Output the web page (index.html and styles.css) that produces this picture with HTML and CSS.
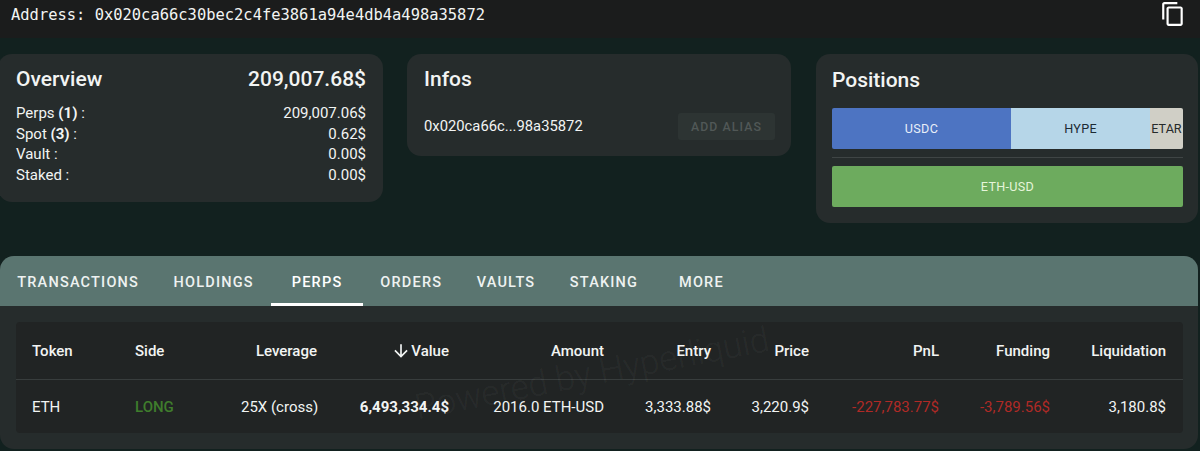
FILE: index.html
```html
<!DOCTYPE html>
<html lang="en">
<head>
    <meta charset="UTF-8">
    <meta name="viewport" content="width=device-width, initial-scale=1.0">
    <title>Address</title>
    <link rel="stylesheet" href="styles.css">
</head>
<body>
    <!-- Address bar -->
    <header class="topbar">
        <span class="address">Address: 0x020ca66c30bec2c4fe3861a94e4db4a498a35872</span>
        <svg class="copy-icon" viewBox="0 0 24 24" fill="currentColor">
            <path d="M16 1H4c-1.1 0-2 .9-2 2v14h2V3h12V1zm3 4H8c-1.1 0-2 .9-2 2v14c0 1.1.9 2 2 2h11c1.1 0 2-.9 2-2V7c0-1.1-.9-2-2-2zm0 16H8V7h11v14z"/>
        </svg>
    </header>

    <div class="cards">
        <!-- Overview -->
        <section class="card overview">
            <div class="overview-head">
                <h2>Overview</h2>
                <h2>209,007.68$</h2>
            </div>
            <div class="stat"><span>Perps <b>(1)</b> :</span><span>209,007.06$</span></div>
            <div class="stat"><span>Spot <b>(3)</b> :</span><span>0.62$</span></div>
            <div class="stat"><span>Vault :</span><span>0.00$</span></div>
            <div class="stat"><span>Staked :</span><span>0.00$</span></div>
        </section>

        <!-- Infos -->
        <section class="card infos">
            <h2>Infos</h2>
            <div class="infos-row">
                <span class="short-address">0x020ca66c...98a35872</span>
                <button class="alias-btn" disabled>Add alias</button>
            </div>
        </section>

        <!-- Positions -->
        <section class="card positions">
            <h2>Positions</h2>
            <div class="bar">
                <div class="seg seg-usdc">USDC</div>
                <div class="seg seg-hype">HYPE</div>
                <div class="seg seg-etar">ETAR</div>
            </div>
            <hr class="bar-divider">
            <div class="bar">
                <div class="seg seg-eth">ETH-USD</div>
            </div>
        </section>
    </div>

    <!-- Tabs and table -->
    <section class="panel">
        <nav class="tabs">
            <a class="tab">Transactions</a>
            <a class="tab">Holdings</a>
            <a class="tab active">Perps</a>
            <a class="tab">Orders</a>
            <a class="tab">Vaults</a>
            <a class="tab">Staking</a>
            <a class="tab">More</a>
        </nav>
        <div class="table-wrap">
            <table>
                <thead>
                    <tr>
                        <th class="left">Token</th>
                        <th class="left">Side</th>
                        <th>Leverage</th>
                        <th>
                            <svg class="sort-icon" viewBox="0 0 24 24" fill="currentColor">
                                <path d="M20 12l-1.41-1.41L13 16.17V4h-2v12.17l-5.58-5.59L4 12l8 8 8-8z"/>
                            </svg>
                            Value
                        </th>
                        <th>Amount</th>
                        <th>Entry</th>
                        <th>Price</th>
                        <th>PnL</th>
                        <th>Funding</th>
                        <th>Liquidation</th>
                    </tr>
                </thead>
                <tbody>
                    <tr>
                        <td class="left">ETH</td>
                        <td class="left long">LONG</td>
                        <td>25X (cross)</td>
                        <td class="strong">6,493,334.4$</td>
                        <td>2016.0 ETH-USD</td>
                        <td>3,333.88$</td>
                        <td>3,220.9$</td>
                        <td class="loss">-227,783.77$</td>
                        <td class="loss">-3,789.56$</td>
                        <td>3,180.8$</td>
                    </tr>
                </tbody>
            </table>
            <div class="watermark">Powered by Hyperliquid</div>
        </div>
    </section>
</body>
</html>
```

FILE: styles.css
```css
html, body {
    height: 451px;
    overflow: hidden;
}
body {
    font-family: Roboto, "Liberation Sans", sans-serif;
    margin: 0;
    padding: 0;
    background-color: #12211f;
    color: #f2f4f3;
}
h2 {
    margin: 0;
    font-size: 21px;
    font-weight: 500;
    line-height: 26px;
}

.topbar {
    height: 38px;
    background-color: #1b1c1c;
    display: flex;
    justify-content: space-between;
    padding: 0 14px 0 11px;
    box-sizing: border-box;
}
.address {
    font-family: "DejaVu Sans Mono", monospace;
    font-size: 15.45px;
    line-height: 31px;
}
.copy-icon {
    width: 26px;
    height: 26px;
    margin-top: 1px;
    color: #fff;
}

.cards {
    display: grid;
    grid-template-columns: 385px 384px 383px;
    column-gap: 24px;
    align-items: start;
    margin: 16px 0 33px -2px;
}
.card {
    background-color: #262c2c;
    border-radius: 14px;
    box-sizing: border-box;
}

.overview {
    height: 148px;
    padding: 12px 17px 0 18px;
}
.overview-head {
    display: flex;
    justify-content: space-between;
    margin-bottom: 11px;
}
.stat {
    display: flex;
    justify-content: space-between;
    font-size: 15px;
    line-height: 20.5px;
}

.infos {
    height: 102px;
    padding: 12px 16px 0 17px;
}
.infos-row {
    display: flex;
    justify-content: space-between;
    align-items: center;
    margin-top: 21px;
    font-size: 14.8px;
}
.short-address {
    margin-top: -2px;
}
.alias-btn {
    width: 97px;
    height: 27px;
    padding: 0;
    border: none;
    border-radius: 3px;
    background-color: #2d3433;
    color: #515857;
    font-family: inherit;
    font-size: 12.3px;
    font-weight: 500;
    letter-spacing: 1.1px;
    text-transform: uppercase;
}

.positions {
    height: 169px;
    margin-left: 1px;
    padding: 13px 15px 0 16px;
}
.positions h2 {
    margin-bottom: 15px;
}
.bar {
    display: flex;
    height: 41px;
    border-radius: 2px;
    overflow: hidden;
}
.seg {
    display: flex;
    align-items: center;
    justify-content: center;
    font-size: 12.6px;
    letter-spacing: 0.3px;
}
.seg-usdc {
    width: 179px;
    background-color: #4d74c2;
    color: #e8eef8;
}
.seg-hype {
    width: 139px;
    background-color: #b6d6e8;
    color: #1c2a33;
}
.seg-etar {
    flex: 1;
    background-color: #d0cfc6;
    color: #262a2a;
    letter-spacing: 0;
}
.seg-eth {
    flex: 1;
    background-color: #6dab5e;
    color: #e6f5da;
}
.bar-divider {
    margin: 8px 0 8px;
    border: none;
    border-top: 1px solid #3f4545;
}

.panel {
    width: 1198px;
    height: 193px;
    background-color: #262c2c;
    border-radius: 14px;
    overflow: hidden;
}
.tabs {
    display: flex;
    height: 50px;
    background-color: #5a7570;
}
.tab {
    min-width: 92px;
    height: 50px;
    padding: 0 17.25px;
    box-sizing: border-box;
    line-height: 54px;
    text-align: center;
    font-size: 14.5px;
    font-weight: 500;
    letter-spacing: 1.2px;
    text-transform: uppercase;
    color: #eef2f1;
}
.tab.active {
    color: #fff;
    box-shadow: inset 0 -3px 0 #fff;
}

.table-wrap {
    position: relative;
    margin: 16px 16px 0;
    width: 1167px;
    background-color: #212424;
    border-radius: 4px;
}
table {
    width: 1167px;
    table-layout: fixed;
    border-collapse: collapse;
    font-size: 15px;
}
th, td {
    padding: 2px 16px 0;
    text-align: right;
    white-space: nowrap;
    box-sizing: border-box;
}
th {
    height: 57px;
    font-weight: 500;
    border-bottom: 1px solid #383d3d;
}
td {
    height: 54px;
}
th:last-child, td:last-child {
    padding-right: 17px;
}
th:nth-child(1) { width: 103px; }
th:nth-child(2) { width: 106px; }
th:nth-child(3) { width: 108px; }
th:nth-child(4) { width: 132px; }
th:nth-child(5) { width: 155px; }
th:nth-child(6) { width: 107px; }
th:nth-child(7) { width: 98px; }
th:nth-child(8) { width: 130px; }
th:nth-child(9) { width: 111px; }
th:nth-child(10) { width: 117px; }
th.left, td.left {
    text-align: left;
}
.sort-icon {
    width: 20px;
    height: 20px;
    margin-right: -3px;
    vertical-align: -5px;
}
.long {
    color: #3f7d2c;
    font-weight: 500;
}
.strong {
    font-weight: 700;
}
.loss {
    color: #b02a26;
}
.watermark {
    position: absolute;
    left: 396px;
    top: 31px;
    font-size: 35px;
    font-weight: 300;
    white-space: nowrap;
    color: rgba(255, 255, 255, 0.05);
    transform: rotate(-11deg);
    pointer-events: none;
}
```
